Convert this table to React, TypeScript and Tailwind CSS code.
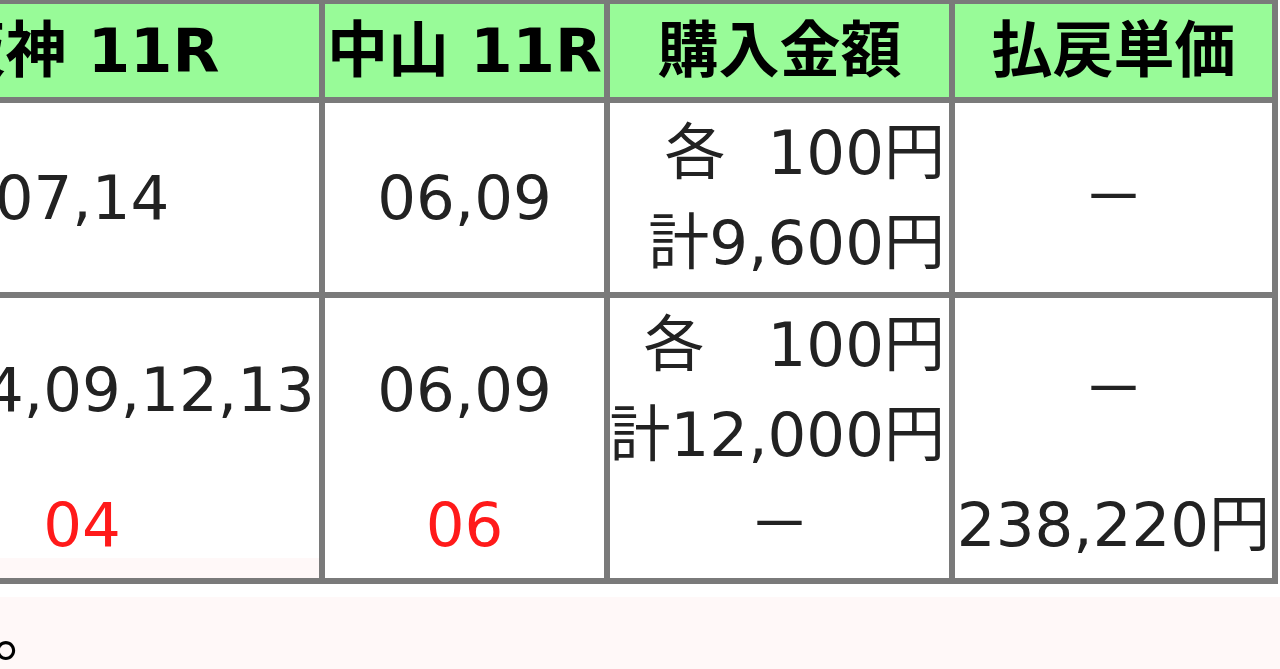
export default function App() {
  const cell = "bg-white flex items-center justify-center whitespace-nowrap";
  const head = "bg-[#98fb98] flex items-center justify-center font-bold text-black whitespace-nowrap";

  return (
    <div className="h-[669px] w-[1280px] overflow-hidden bg-white font-['DejaVu_Sans','Noto_Sans_CJK_JP',sans-serif] text-[61px] leading-[90px] text-[#222]">
      {/* 表 (左端は画面外) */}
      <div className="ml-[-161px] mt-[-2px] grid w-max grid-cols-[474px_279px_339px_317px] grid-rows-[93px_189px_280px] gap-[6px] border-[6px] border-[#7a7a7a] bg-[#7a7a7a]">
        <div className={head}>阪神 11R</div>
        <div className={head}>中山 11R</div>
        <div className={head}>購入金額</div>
        <div className={head}>払戻単価</div>

        <div className={cell}>07,14</div>
        <div className={cell}>06,09</div>
        <div className="flex flex-col items-end justify-center whitespace-nowrap bg-white pr-[4px]">
          <div>
            各<span className="ml-[42px]">100円</span>
          </div>
          <div>計9,600円</div>
        </div>
        <div className={cell}>－</div>

        <div className="flex flex-col whitespace-nowrap bg-white bg-[linear-gradient(to_bottom,white_260px,#fff8f8_260px)] pt-[2px]">
          <div className="flex h-[180px] items-center justify-center">01,04,09,12,13</div>
          <div className="flex h-[90px] items-center justify-center text-[#ff1a1a]">04</div>
        </div>
        <div className="flex flex-col whitespace-nowrap bg-white pt-[2px]">
          <div className="flex h-[180px] items-center justify-center">06,09</div>
          <div className="flex h-[90px] items-center justify-center text-[#ff1a1a]">06</div>
        </div>
        <div className="flex flex-col whitespace-nowrap bg-white pt-[2px]">
          <div className="flex h-[180px] flex-col items-end pr-[4px]">
            <div>
              各<span className="ml-[63px]">100円</span>
            </div>
            <div>計12,000円</div>
          </div>
          <div className="flex h-[90px] items-center justify-center">－</div>
        </div>
        <div className="flex flex-col whitespace-nowrap bg-white pt-[2px]">
          <div className="flex h-[180px] items-center justify-center">－</div>
          <div className="flex h-[90px] items-center justify-center">238,220円</div>
        </div>
      </div>

      <div className="mt-[13px] h-[100px] bg-[#fff8f8] leading-[76px]">
        <span className="ml-[-6px] text-black">。</span>
      </div>
    </div>
  );
}
